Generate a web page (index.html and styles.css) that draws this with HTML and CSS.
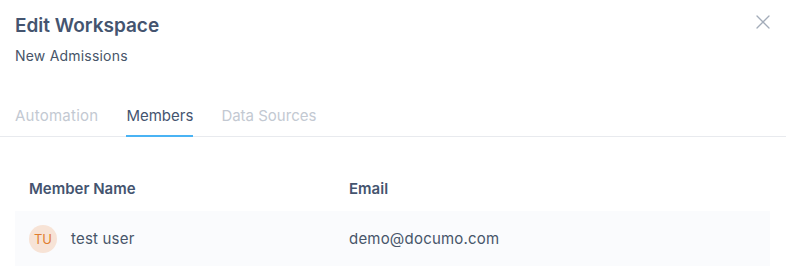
FILE: index.html
```html
<!DOCTYPE html>
<html>
<head>
<meta charset="utf-8">
<link rel="stylesheet" href="styles.css">
</head>
<body>
<div class="modal">
  <div class="header">
    <div class="titles">
      <h1 class="title">Edit Workspace</h1>
      <div class="subtitle">New Admissions</div>
    </div>
    <button class="close" aria-label="Close">
      <svg width="14" height="14" viewBox="0 0 14 14"><path d="M1 1L13 13M13 1L1 13" stroke="#a3acb9" stroke-width="1.3" stroke-linecap="round"/></svg>
    </button>
  </div>
  <div class="tabs">
    <div class="tab">Automation</div>
    <div class="tab active">Members</div>
    <div class="tab">Data Sources</div>
  </div>
  <div class="table">
    <div class="thead">
      <div class="col-name">Member Name</div>
      <div class="col-email">Email</div>
    </div>
    <div class="row">
      <div class="col-name user">
        <span class="avatar">TU</span>
        <span>test user</span>
      </div>
      <div class="col-email">demo@documo.com</div>
    </div>
  </div>
</div>
</body>
</html>
```
FILE: styles.css
```css
* { box-sizing: border-box; }
html, body { margin: 0; padding: 0; background: #fff; }
body { font-family: Inter, "Noto Sans", sans-serif; color: #475569; }
.modal { width: 786px; height: 279px; }
.header { display: flex; justify-content: space-between; align-items: flex-start; padding: 14px 16px 0 15px; }
.title { margin: 0; font-size: 19px; font-weight: 600; line-height: 24px; color: #44546f; }
.subtitle { margin-top: 8px; font-size: 14px; letter-spacing: 0.2px; line-height: 20px; color: #475569; }
.close { border: 0; background: none; padding: 0; margin-top: 1px; cursor: pointer; display: flex; }
.tabs { display: flex; gap: 28px; padding: 0 15px; margin-top: 40px; border-bottom: 1px solid #e8eaee; }
.tab { font-size: 15px; line-height: 20px; padding-bottom: 9px; color: #c3c9d2; border-bottom: 2px solid transparent; margin-bottom: -1px; }
.tab:first-child { letter-spacing: 0.25px; }
.tab.active { color: #44546f; border-bottom-color: #4ab3f4; }
.table { padding: 0 16px 0 15px; margin-top: 42px; }
.thead { display: flex; font-size: 15px; font-weight: 600; line-height: 20px; color: #44546f; padding: 0 14px 12px; }
.col-name { width: 320px; }
.row { display: flex; align-items: center; background: #fafbfd; height: 55px; padding: 0 14px; font-size: 15px; letter-spacing: 0.2px; color: #475569; }
.user { display: flex; align-items: center; gap: 14px; }
.avatar { width: 28px; height: 28px; border-radius: 50%; background: #f7e3d6; color: #e07d2e; font-size: 13px; letter-spacing: 0; display: flex; align-items: center; justify-content: center; }
```
